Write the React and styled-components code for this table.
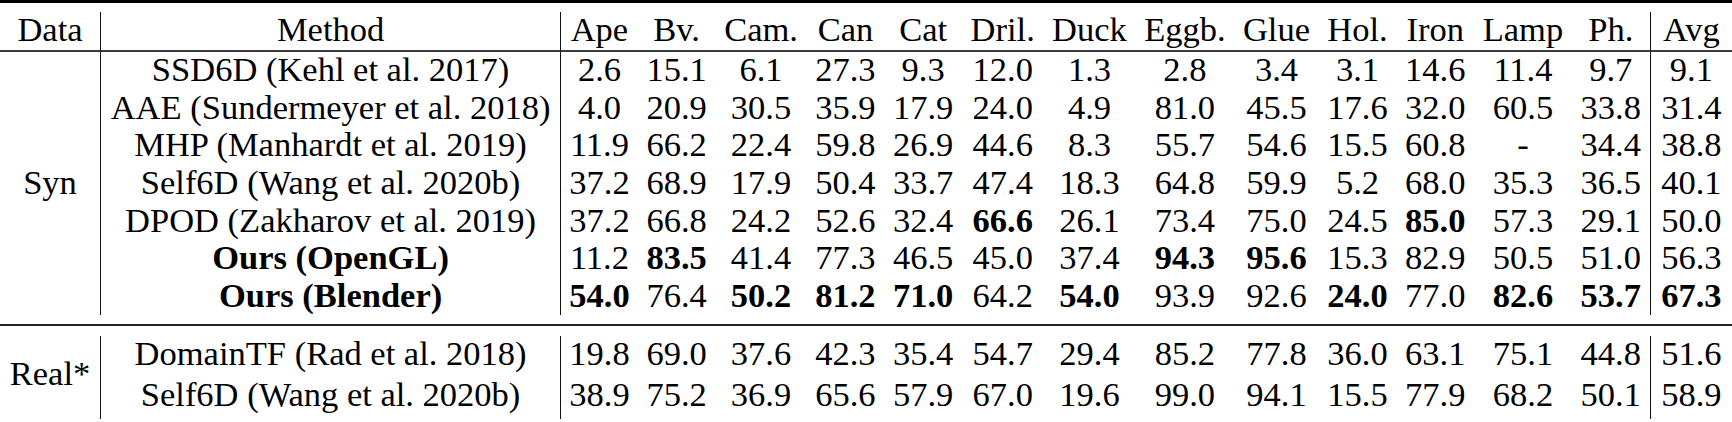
import React from "react";
import styled, { createGlobalStyle } from "styled-components";

const SERIF = `"Liberation Serif", "Times New Roman", serif`;

const GlobalStyle = createGlobalStyle`
  html, body {
    margin: 0;
    padding: 0;
    background: #fff;
  }
  body {
    font-family: ${SERIF};
    color: #000;
  }
`;

// object columns, widths measured off the reference
const objects = [
  { label: "Ape", w: 77.7 },
  { label: "Bv.", w: 77.7 },
  { label: "Cam.", w: 91.1 },
  { label: "Can", w: 77.7 },
  { label: "Cat", w: 77.7 },
  { label: "Dril.", w: 81.5 },
  { label: "Duck", w: 92.0 },
  { label: "Eggb.", w: 98.8 },
  { label: "Glue", w: 84.4 },
  { label: "Hol.", w: 77.7 },
  { label: "Iron", w: 77.7 },
  { label: "Lamp", w: 97.8 },
  { label: "Ph.", w: 77.9 },
];

// a leading * marks a bold value, the last value is the average
const synRows = [
  { method: "SSD6D (Kehl et al. 2017)", values: "2.6 15.1 6.1 27.3 9.3 12.0 1.3 2.8 3.4 3.1 14.6 11.4 9.7 9.1" },
  { method: "AAE (Sundermeyer et al. 2018)", values: "4.0 20.9 30.5 35.9 17.9 24.0 4.9 81.0 45.5 17.6 32.0 60.5 33.8 31.4" },
  { method: "MHP (Manhardt et al. 2019)", values: "11.9 66.2 22.4 59.8 26.9 44.6 8.3 55.7 54.6 15.5 60.8 - 34.4 38.8" },
  { method: "Self6D (Wang et al. 2020b)", values: "37.2 68.9 17.9 50.4 33.7 47.4 18.3 64.8 59.9 5.2 68.0 35.3 36.5 40.1" },
  { method: "DPOD (Zakharov et al. 2019)", values: "37.2 66.8 24.2 52.6 32.4 *66.6 26.1 73.4 75.0 24.5 *85.0 57.3 29.1 50.0" },
  { method: "Ours (OpenGL)", bold: true, values: "11.2 *83.5 41.4 77.3 46.5 45.0 37.4 *94.3 *95.6 15.3 82.9 50.5 51.0 56.3" },
  { method: "Ours (Blender)", bold: true, values: "*54.0 76.4 *50.2 *81.2 *71.0 64.2 *54.0 93.9 92.6 *24.0 77.0 *82.6 *53.7 *67.3" },
];

const realRows = [
  { method: "DomainTF (Rad et al. 2018)", values: "19.8 69.0 37.6 42.3 35.4 54.7 29.4 85.2 77.8 36.0 63.1 75.1 44.8 51.6" },
  { method: "Self6D (Wang et al. 2020b)", values: "38.9 75.2 36.9 65.6 57.9 67.0 19.6 99.0 94.1 15.5 77.9 68.2 50.1 58.9" },
];

const TOTAL_COLS = objects.length + 3;

const Table = styled.table`
  width: 1732px;
  table-layout: fixed;
  border-collapse: separate;
  border-spacing: 0;
  font-family: ${SERIF};
  font-size: 34.5px;
  line-height: 1;
  color: #000;
`;

const Col = styled.col`
  width: ${(p) => p.$w}px;
`;

const Row = styled.tr`
  height: ${(p) => p.$h}px;
`;

const Gap = styled.td`
  box-sizing: border-box;
  height: ${(p) => p.$h}px;
  padding: 0;
  font-size: 0;
  line-height: 0;
  border-top: ${(p) => p.$top || 0}px solid #000;
  border-bottom: ${(p) => p.$bottom || 0}px solid ${(p) => p.$color || "#000"};
`;

const Cell = styled.td`
  box-sizing: border-box;
  padding: 0 0 ${(p) => p.$pb || 0}px;
  text-align: center;
  vertical-align: middle;
  white-space: nowrap;
  font-family: ${SERIF};
  font-weight: ${(p) => (p.$bold ? 700 : 400)};
  border-left: ${(p) => (p.$rule ? "1px solid #111" : "none")};
`;

const HeadCell = styled(Cell)`
  border-bottom: 2px solid #3c3c3c;
`;

function DataRows({ label, rows, height, pb }) {
  return rows.map((row, i) => {
    const values = row.values.split(" ");
    return (
      <Row key={row.method + i} $h={height}>
        {i === 0 && (
          <Cell rowSpan={rows.length} $pb={pb}>
            {label}
          </Cell>
        )}
        <Cell $rule $bold={row.bold} $pb={pb}>
          {row.method}
        </Cell>
        {values.map((v, j) => {
          const bold = v.startsWith("*");
          return (
            <Cell
              key={j}
              $pb={pb}
              $bold={bold}
              $rule={j === 0 || j === values.length - 1}
            >
              {bold ? v.slice(1) : v}
            </Cell>
          );
        })}
      </Row>
    );
  });
}

export default function App() {
  return (
    <>
      <GlobalStyle />
      <Table>
        <colgroup>
          <Col $w={100} />
          <Col $w={460} />
          {objects.map((o) => (
            <Col key={o.label} $w={o.w} />
          ))}
          <Col $w={82.1} />
        </colgroup>
        <tbody>
          <tr>
            <Gap colSpan={TOTAL_COLS} $h={11.5} $top={3} />
          </tr>
          <Row $h={40}>
            <HeadCell $pb={3}>Data</HeadCell>
            <HeadCell $pb={3} $rule>
              Method
            </HeadCell>
            {objects.map((o, j) => (
              <HeadCell key={o.label} $pb={3} $rule={j === 0}>
                {o.label}
              </HeadCell>
            ))}
            <HeadCell $pb={3} $rule>
              Avg
            </HeadCell>
          </Row>
          <DataRows label="Syn" rows={synRows} height={37.65} pb={2} />
          <tr>
            <Gap colSpan={TOTAL_COLS} $h={11} $bottom={2} $color="#222" />
          </tr>
          <tr>
            <Gap colSpan={TOTAL_COLS} $h={9.6} />
          </tr>
          <DataRows label="Real*" rows={realRows} height={37.7} pb={7} />
          <tr>
            <Gap colSpan={TOTAL_COLS} $h={10} $bottom={3} />
          </tr>
        </tbody>
      </Table>
    </>
  );
}
